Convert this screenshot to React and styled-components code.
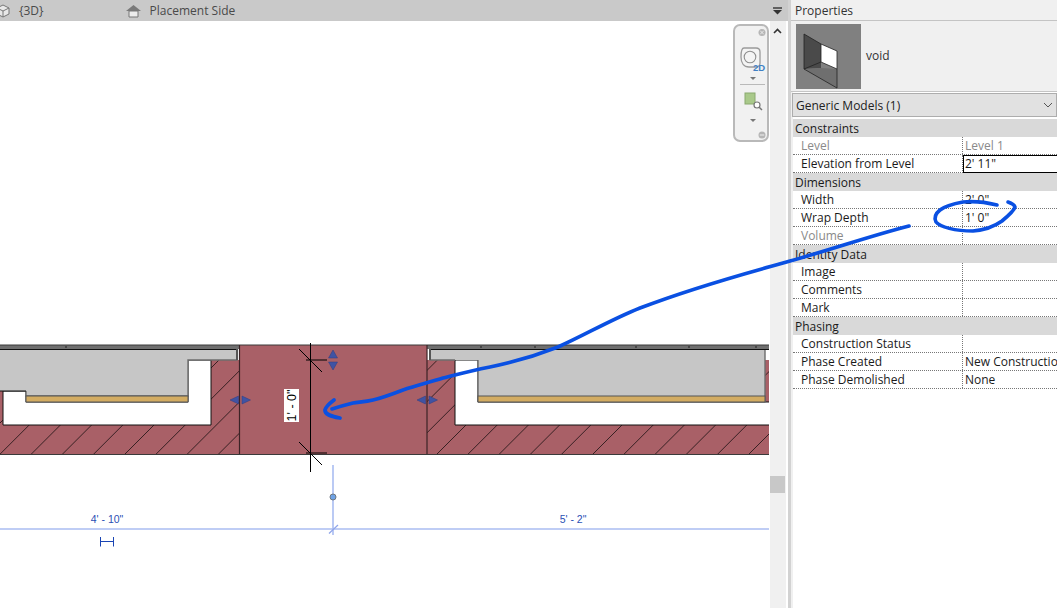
import React from "react";
import styled, { createGlobalStyle } from "styled-components";

const GlobalStyle = createGlobalStyle`
  html, body {
    margin: 0;
    padding: 0;
    background: #fff;
    overflow: hidden;
  }
  body {
    font-family: "Open Sans", "Noto Sans", "Liberation Sans", sans-serif;
    font-size: 12px;
    color: #1a1a1a;
  }
`;

const Page = styled.div`
  position: relative;
  display: flex;
  width: 1057px;
  height: 608px;
  overflow: hidden;
`;

const ViewArea = styled.div`
  display: flex;
  flex-direction: column;
  width: 788px;
  flex: none;
`;

const TopBar = styled.div`
  display: flex;
  align-items: center;
  height: 21px;
  flex: none;
  background: #c9c9c9;
  color: #4a4a4a;
  padding-right: 4px;
`;

const BarItem = styled.div`
  display: flex;
  align-items: center;
  gap: ${(p) => p.$gap}px;
  margin-left: ${(p) => p.$left}px;
`;

const BarMenu = styled.div`
  margin-left: auto;
  display: flex;
  margin-right: 2px;
`;

const CanvasRow = styled.div`
  display: flex;
  flex: 1;
  min-height: 0;
`;

const Canvas = styled.div`
  position: relative;
  width: 770px;
  flex: none;
  background: #fff;
`;

const Drawing = styled.svg`
  display: block;
  width: 770px;
  height: 587px;
`;

const Scrollbar = styled.div`
  position: relative;
  width: 16px;
  flex: none;
  background: #f0f0f0;
  margin-right: 2px;
`;

const ScrollArrow = styled.svg`
  position: absolute;
  left: 3px;
  top: 7px;
`;

const ScrollThumb = styled.div`
  position: absolute;
  left: 0;
  top: 455px;
  width: 15px;
  height: 17px;
  background: #c8c8c8;
`;

const NavBar = styled.div`
  position: absolute;
  left: 733px;
  top: 3px;
  width: 32px;
  height: 114px;
  border: 2px solid #b9b9b9;
  border-radius: 7px;
  background: #f1f1f1;
`;

const Splitter = styled.div`
  width: 3px;
  flex: none;
  background: #d2d2d2;
`;

const Panel = styled.div`
  flex: 1;
  min-width: 0;
  display: flex;
  flex-direction: column;
  background: #fff;
  border-left: 2px solid #f0f0f0;
`;

const PanelTitle = styled.div`
  height: 21px;
  flex: none;
  margin-left: -2px;
  padding-left: 4px;
  display: flex;
  align-items: center;
  background: #f0f0f0;
  color: #333;
  border-bottom: 1px solid #c4c4c4;
  box-sizing: border-box;
`;

const TypeRow = styled.div`
  height: 71px;
  flex: none;
  margin-left: -2px;
  box-sizing: border-box;
  padding: 3px 0 0 5px;
  display: flex;
  gap: 5px;
  background: #f0f0f0;
  border-bottom: 1px solid #c4c4c4;
`;

const Thumb = styled.svg`
  width: 65px;
  height: 65px;
  display: block;
  flex: none;
`;

const TypeName = styled.span`
  align-self: center;
  margin-top: -5px;
  color: #333;
`;

const Combo = styled.div`
  height: 24px;
  flex: none;
  margin-left: -1px;
  box-sizing: border-box;
  margin-top: 1px;
  padding: 0 3px 0 3px;
  display: flex;
  align-items: center;
  justify-content: space-between;
  background: #e1e1e1;
  border: 1px solid #adadad;
  color: #222;
`;

const GroupRow = styled.div`
  height: 18px;
  box-sizing: border-box;
  padding-left: 2px;
  display: flex;
  align-items: center;
  background: #d9d9d9;
  color: #1a1a1a;
  margin-top: ${(p) => (p.$first ? 2 : 0)}px;
`;

const Row = styled.div`
  height: 18px;
  box-sizing: border-box;
  display: grid;
  grid-template-columns: 170px 1fr;
  border-bottom: 1px dotted #777;
  color: ${(p) => (p.$muted ? "#8a8a8a" : "#1a1a1a")};
`;

const RowLabel = styled.div`
  padding-left: 8px;
  line-height: 17px;
  border-right: 1px dotted #777;
  white-space: nowrap;
`;

const RowValue = styled.div`
  padding-left: 2px;
  line-height: 17px;
  white-space: nowrap;
  overflow: hidden;
  box-sizing: border-box;
  ${(p) =>
    p.$editing &&
    `
    border: 1px solid #000;
    border-right: none;
    padding-left: 1px;
    height: 18px;
    line-height: 15px;
  `}
`;

const Ink = styled.svg`
  position: absolute;
  left: 0;
  top: 0;
  pointer-events: none;
`;

const rows = [
  { group: "Constraints" },
  { label: "Level", value: "Level 1", muted: true },
  { label: "Elevation from Level", value: `2'  11"`, editing: true },
  { group: "Dimensions" },
  { label: "Width", value: `2'  0"` },
  { label: "Wrap Depth", value: `1'  0"` },
  { label: "Volume", value: "", muted: true },
  { group: "Identity Data" },
  { label: "Image", value: "" },
  { label: "Comments", value: "" },
  { label: "Mark", value: "" },
  { group: "Phasing" },
  { label: "Construction Status", value: "" },
  { label: "Phase Created", value: "New Construction" },
  { label: "Phase Demolished", value: "None" },
];

const RED = "#a96067";
const GRAY = "#c6c6c6";
const TAN = "#d3ac62";
const ARROW = "#4053a3";

// wall hatching: 45 degree lines, about 31px apart along the bottom edge
const hatchStarts = Array.from({ length: 26 }, (_, i) => i * 31.2 - 31);

function Wall() {
  return (
    <>
      <defs>
        <clipPath id="hatchClip">
          <path d="M0 360H239V454H0Z M427 360H769V454H427Z" />
        </clipPath>
      </defs>

      {/* masonry */}
      <rect x="0" y="360" width="240" height="94" fill={RED} />
      <rect x="239" y="345" width="188" height="109" fill={RED} />
      <rect x="427" y="360" width="342" height="94" fill={RED} />

      <g clipPath="url(#hatchClip)" stroke="#2b1a1c" strokeWidth="0.9">
        {hatchStarts.map((x) => (
          <line key={x} x1={x} y1="454" x2={x + 100} y2="354" />
        ))}
      </g>

      {/* left void and finish */}
      <path d="M3 391H26V402H188V360H211V425H3Z" fill="#fff" stroke="#111" strokeWidth="1" />
      <path d="M0 349H237V360H188V396H26V391H0Z" fill={GRAY} />
      <path d="M26 391V396H188V360H237V349H0" fill="none" stroke="#6d6d6d" strokeWidth="1.4" />
      <path d="M0 391H26" stroke="#111" />
      <rect x="26" y="396" width="162" height="6" fill={TAN} stroke="#555" strokeWidth="1" />

      {/* right void and finish */}
      <path d="M769 402H478V396H478V360H455V425H769" fill="#fff" />
      <path d="M769 402H478V360H455V425H769" fill="none" stroke="#111" strokeWidth="1" />
      <path d="M430 360V349H765V396H478V360Z" fill={GRAY} />
      <path d="M455 360H430V349H765V402M478 360V402" fill="none" stroke="#6d6d6d" strokeWidth="1.4" />
      <rect x="478" y="396" width="287" height="6" fill={TAN} stroke="#555" strokeWidth="1" />

      {/* top sheathing */}
      <rect x="0" y="345" width="239" height="4" fill="#6f6f6f" />
      <rect x="427" y="345" width="342" height="4" fill="#6f6f6f" />
      <path d="M0 349.5H237M430 349.5H769" stroke="#111" strokeWidth="1" />
      <path d="M237 349V360M430 349V360" stroke="#555" strokeWidth="2" />
      <path d="M66 346v2M481 346v2M535 346v2M636 346v2M689 346v2M756 346v2" stroke="#222" strokeWidth="1" />

      {/* outlines */}
      <path d="M0 454.5H769M0 345H769" stroke="#3a3a3a" strokeWidth="1" />
      <path d="M239.5 345V454M427 345V454" stroke="#3c2326" strokeWidth="1.2" />
    </>
  );
}

function Dimension() {
  return (
    <>
      <path d="M310.5 343V472M306 360H327M299 349L322 372M306 453H327M299 442L322 465" stroke="#000" strokeWidth="1" fill="none" />

      <g fill={ARROW} stroke="#2d3c80" strokeWidth="0.5">
        <path d="M333 350L337.5 358H328.5Z" />
        <path d="M333 370L337.5 362H328.5Z" />
        <path d="M230 400L238.5 396V404Z" />
        <path d="M250.5 400L242 396V404Z" />
        <path d="M417 400L425.5 396V404Z" />
        <path d="M437.5 400L429 396V404Z" />
      </g>

      <rect x="284" y="389" width="15" height="33" fill="#fff" />
      <text
        x="0"
        y="0"
        transform="translate(296 405.5) rotate(-90)"
        textAnchor="middle"
        fontFamily="Liberation Sans, sans-serif"
        fontSize="12.5"
        fill="#000"
      >
        {`1' - 0"`}
      </text>

      {/* reference dimension string */}
      <path d="M0 529H769M333 465V535" stroke="#aabdf2" strokeWidth="1.6" fill="none" />
      <path d="M329 533.5L338 525" stroke="#8fa5ea" strokeWidth="1.2" />
      <circle cx="333" cy="497" r="3" fill="#6ea2e6" stroke="#6f7780" strokeWidth="1" />
      <text x="107" y="523" textAnchor="middle" fontFamily="Liberation Sans, sans-serif" fontSize="10.5" fill="#2a50b4">
        {`4' - 10"`}
      </text>
      <text x="573" y="523" textAnchor="middle" fontFamily="Liberation Sans, sans-serif" fontSize="10.5" fill="#2a50b4">
        {`5' - 2"`}
      </text>
      <path d="M100.5 537V546.5M113.5 537V546.5M101 541.5H113" stroke="#1a45b4" strokeWidth="1" fill="none" />
    </>
  );
}

function NavWheelIcon() {
  return (
    <svg width="30" height="34" viewBox="0 0 30 34" style={{ display: "block" }}>
      <path d="M10 3H20C23 3 25 5 25 8V20C25 23 23 25 20 25H10C5 25 2 21 2 15C2 9 5 3 10 3Z" fill="#f4f4f4" stroke="#9a9a9a" strokeWidth="1.4" />
      <circle cx="12" cy="14" r="6.5" fill="none" stroke="#8f8f8f" strokeWidth="1.2" />
    </svg>
  );
}

export default function App() {
  return (
    <Page>
      <GlobalStyle />
      <ViewArea>
        <TopBar>
          <BarItem $left={-4} $gap={8}>
            <svg width="15" height="14" viewBox="0 0 15 14">
              <path d="M1 4L7 1L13 4V10L7 13L1 10Z" fill="#e8e8e8" stroke="#777" strokeWidth="1" />
              <path d="M1 4L7 7L13 4M7 7V13" fill="none" stroke="#777" strokeWidth="1" />
            </svg>
            <span>{"{3D}"}</span>
          </BarItem>
          <BarItem $left={82} $gap={9}>
            <svg width="15" height="14" viewBox="0 0 15 14">
              <path d="M7.5 1L15 7H0Z" fill="#7a7a7a" />
              <path d="M3 7H12V13H3Z" fill="#ececec" stroke="#777" strokeWidth="1" />
            </svg>
            <span>Placement Side</span>
          </BarItem>
          <BarMenu>
            <svg width="9" height="8" viewBox="0 0 9 8">
              <path d="M0 1H9" stroke="#333" strokeWidth="1.4" />
              <path d="M0 3H9L4.5 7.5Z" fill="#333" />
            </svg>
          </BarMenu>
        </TopBar>
        <CanvasRow>
          <Canvas>
            <Drawing viewBox="0 21 770 587">
              <Wall />
              <Dimension />
            </Drawing>
            <NavBar>
              <svg width="32" height="114" viewBox="733 23 32 114" style={{ display: "block" }}>
                <circle cx="760" cy="29.5" r="3.5" fill="#b5b5b5" />
                <path d="M758.2 27.7L761.8 31.3M761.8 27.7L758.2 31.3" stroke="#efefef" strokeWidth="0.9" />
                <path d="M742 45H754C757 45 758 47 758 49V60C758 63 756 64 754 64H747C742 64 739 60 739 54C739 49 740 45 742 45Z" fill="#f4f4f4" stroke="#9a9a9a" strokeWidth="1.3" />
                <circle cx="748" cy="54" r="5.8" fill="none" stroke="#8f8f8f" strokeWidth="1.1" />
                <text x="751" y="68" fontFamily="Liberation Sans, sans-serif" fontWeight="700" fontSize="9.5" fill="#3f80c4">2D</text>
                <path d="M748 74H754L751 77Z" fill="#777" />
                <path d="M738 81.5H763" stroke="#b9b9b9" strokeWidth="1" />
                <rect x="743" y="90" width="10" height="11" fill="#a9c98a" stroke="#8aa96f" strokeWidth="1" />
                <circle cx="755" cy="102" r="3" fill="#fff" stroke="#777" strokeWidth="1.2" />
                <path d="M757 104L760 107" stroke="#777" strokeWidth="1.5" />
                <path d="M748 116H754L751 119Z" fill="#777" />
                <circle cx="760" cy="132" r="3.5" fill="#b5b5b5" />
                <path d="M757.8 132H762.2" stroke="#efefef" strokeWidth="1" />
              </svg>
            </NavBar>
          </Canvas>
          <Scrollbar>
            <ScrollArrow width="9" height="6" viewBox="0 0 9 6">
              <path d="M1 5L4.5 1.5L8 5" fill="none" stroke="#333" strokeWidth="1.6" />
            </ScrollArrow>
            <ScrollThumb />
          </Scrollbar>
        </CanvasRow>
      </ViewArea>
      <Splitter />
      <Panel>
        <PanelTitle>Properties</PanelTitle>
        <TypeRow>
          <Thumb viewBox="0 0 65 65">
            <rect width="65" height="65" fill="#808080" />
            <path d="M8 10L25 20V44L8 45Z" fill="#4a4a4a" />
            <path d="M8 45L25 44L41 45L41 64Z" fill="#6f6f6f" />
            <path d="M25 20L41 27V45L25 38Z" fill="#fff" />
            <path d="M8 10L25 20L41 27V45V64L8 45ZM25 20V38L8 45M25 38L41 45" fill="none" stroke="#222" strokeWidth="0.8" />
          </Thumb>
          <TypeName>void</TypeName>
        </TypeRow>
        <Combo>
          <span>Generic Models (1)</span>
          <svg width="10" height="6" viewBox="0 0 10 6">
            <path d="M1 1L5 5L9 1" fill="none" stroke="#555" strokeWidth="1" />
          </svg>
        </Combo>
        {rows.map((row, i) =>
          row.group ? (
            <GroupRow key={row.group} $first={i === 0}>
              {row.group}
            </GroupRow>
          ) : (
            <Row key={row.label} $muted={row.muted}>
              <RowLabel>{row.label}</RowLabel>
              <RowValue $editing={row.editing}>{row.value}</RowValue>
            </Row>
          )
        )}
      </Panel>
      {/* hand drawn mark-up over the whole window */}
      <Ink width="1057" height="608" viewBox="0 0 1057 608" fill="none" stroke="#0a50e2" strokeWidth="3.6" strokeLinecap="round" strokeLinejoin="round">
        <path d="M909 226C870 236 830 250 790 261C755 271 700 285 640 308C610 320 585 335 558 347C535 356 510 363 490 367C470 371 455 375 443 378C430 382 415 386 403 390C390 395 382 398 373 400C365 402 358 402 353 403C345 405 338 407 332 409" />
        <path d="M334 400C330 403 326 406 325 410C325 414 329 416 340 418" strokeWidth="3.8" />
        <path d="M997 205C985 202 973 201 963 202C952 204 945 206 940 210C935 214 934 218 936 222C940 227 955 231 973 231C985 230 995 226 1002 221C1008 216 1014 211 1015 207C1014 204 1011 203 1008 202" />
      </Ink>
    </Page>
  );
}
